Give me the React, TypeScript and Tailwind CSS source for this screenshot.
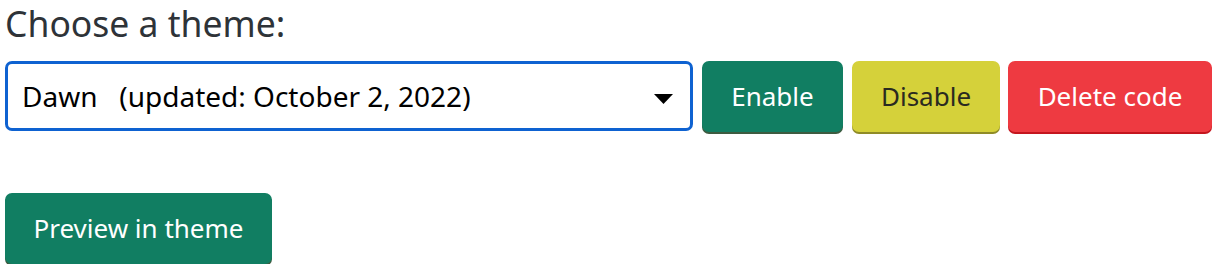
export default function App() {
  return (
    <div className="bg-white px-[5px] pt-[1px] font-['Noto_Sans',sans-serif]">
      <h2 className="text-[35.5px] leading-[44px] text-[#2e3338]">Choose a theme:</h2>
      <div className="mt-[16px] flex items-stretch gap-[9px]">
        <div className="relative flex h-[70px] w-[688px] items-center rounded-[7px] border-[3px] border-[#0e62d1] bg-white pl-[14px] text-[28px] text-black">
          <span>Dawn&nbsp;&nbsp;&nbsp;(updated: October 2, 2022)</span>
          <svg className="absolute right-[17px] top-[30px]" width="19" height="10" viewBox="0 0 19 10">
            <path d="M0 0 L19 0 L9.5 10 Z" fill="#000" />
          </svg>
        </div>
        <button className="h-[71px] w-[141px] rounded-[7px] bg-[#117e62] text-[26px] text-white shadow-[0_2px_0_#3d5b40]">Enable</button>
        <button className="h-[71px] w-[148px] rounded-[7px] bg-[#d5d13a] text-[26px] text-[#2a2a20] shadow-[0_2px_0_#8f8b27]">Disable</button>
        <button className="-ml-[1px] h-[71px] w-[204px] rounded-[7px] bg-[#ee3a41] text-[26px] text-white shadow-[0_2px_0_#c4161e]">Delete code</button>
      </div>
      <button className="mt-[61px] h-[71px] w-[267px] rounded-[7px] bg-[#117e62] text-[26px] text-white shadow-[0_2px_0_#3d5b40]">Preview in theme</button>
    </div>
  );
}
